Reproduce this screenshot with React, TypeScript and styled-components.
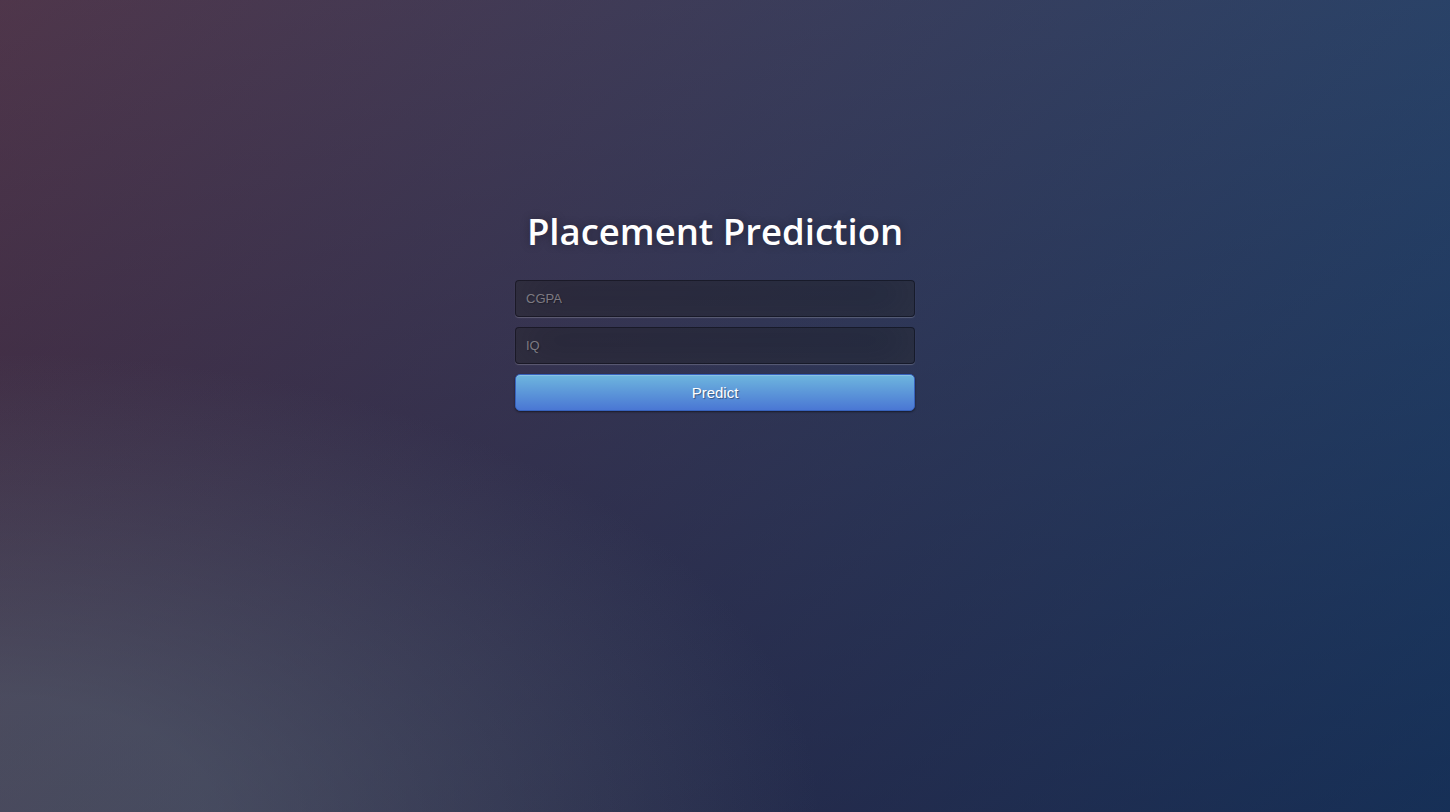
import React from "react";
import styled, { createGlobalStyle } from "styled-components";

const GlobalStyle = createGlobalStyle`
  * { box-sizing: border-box; }
  html, body { margin: 0; height: 100%; }
  body {
    font-family: "Open Sans", "Liberation Sans", sans-serif;
    background: #092756;
  }
`;

const Page = styled.div`
  min-height: 100vh;
  display: flex;
  justify-content: center;
  padding-top: 203px;
  background:
    radial-gradient(ellipse at 0% 100%, rgba(104, 128, 138, 0.4) 10%, rgba(138, 114, 76, 0) 40%),
    linear-gradient(to bottom, rgba(57, 173, 219, 0.25) 0%, rgba(42, 60, 87, 0.4) 100%),
    linear-gradient(135deg, #560e1a 0%, #092756 100%);
`;

// the card sits a little left of the page centre
const Login = styled.div`
  width: 400px;
  margin-right: 20px;
`;

const Title = styled.h1`
  margin: 0 0 21px;
  color: #fff;
  font-family: "Open Sans", sans-serif;
  font-weight: 600;
  font-size: 36.5px;
  line-height: 56px;
  text-align: center;
  text-shadow: 0 0 10px rgba(0, 0, 0, 0.3);
`;

const Form = styled.form`
  display: flex;
  flex-direction: column;
  gap: 10px;
`;

const Field = styled.input`
  width: 100%;
  height: 37px;
  padding: 10px;
  font-family: "Liberation Sans", Arial, sans-serif;
  font-size: 13px;
  color: #fff;
  background: rgba(0, 0, 0, 0.3);
  border: 1px solid rgba(0, 0, 0, 0.3);
  border-radius: 4px;
  outline: none;
  text-shadow: 1px 1px 1px rgba(0, 0, 0, 0.3);
  box-shadow: inset 0 -5px 45px rgba(100, 100, 100, 0.2), 0 1px 1px rgba(255, 255, 255, 0.2);

  &::placeholder {
    color: #7d7a82;
  }
`;

const Button = styled.button`
  display: block;
  width: 100%;
  height: 37px;
  padding: 9px 14px;
  font-family: "Liberation Sans", Arial, sans-serif;
  font-size: 15px;
  line-height: normal;
  color: #fff;
  background-color: #4a77d4;
  background-image: linear-gradient(to bottom, #6eb6de, #4a77d4);
  border: 1px solid #3762bc;
  border-radius: 5px;
  text-shadow: 1px 1px 1px rgba(0, 0, 0, 0.4);
  box-shadow: inset 0 1px 0 rgba(255, 255, 255, 0.2), 0 1px 2px rgba(0, 0, 0, 0.5);
  cursor: pointer;
`;

export default function App() {
  return (
    <>
      <GlobalStyle />
      <Page>
        <Login>
          <Title>Placement Prediction</Title>
          <Form onSubmit={(e) => e.preventDefault()}>
            <Field type="text" name="cgpa" placeholder="CGPA" />
            <Field type="text" name="iq" placeholder="IQ" />
            <Button type="submit">Predict</Button>
          </Form>
        </Login>
      </Page>
    </>
  );
}
